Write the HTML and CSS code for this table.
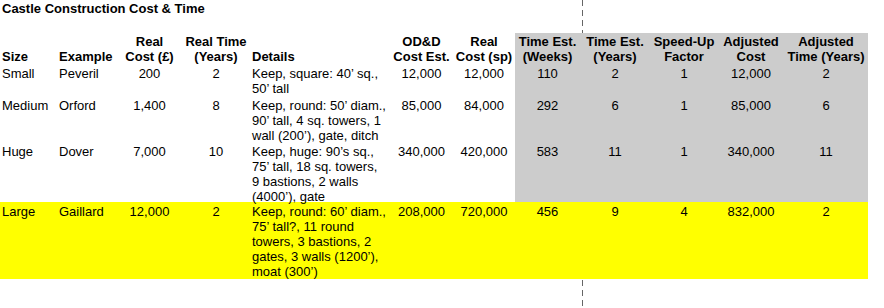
FILE: index.html
```html
<!DOCTYPE html>
<html>
<head>
<meta charset="utf-8">
<link rel="stylesheet" href="styles.css">
</head>
<body>
<div class="sheet">
  <div class="pagebreak"></div>
  <div class="title">Castle Construction Cost &amp; Time</div>
  <table class="grid">
    <colgroup>
      <col class="c-size"><col class="c-example"><col class="c-rcost"><col class="c-rtime"><col class="c-details"><col class="c-odd"><col class="c-rsp"><col class="c-weeks"><col class="c-years"><col class="c-speed"><col class="c-adjc"><col class="c-adjt">
    </colgroup>
    <thead>
      <tr class="r-head">
        <th class="l">Size</th>
        <th class="l">Example</th>
        <th>Real<br>Cost (£)</th>
        <th>Real Time<br>(Years)</th>
        <th class="l">Details</th>
        <th>OD&amp;D<br>Cost Est.</th>
        <th>Real<br>Cost (sp)</th>
        <th class="g">Time Est.<br>(Weeks)</th>
        <th class="g">Time Est.<br>(Years)</th>
        <th class="g">Speed-Up<br>Factor</th>
        <th class="g">Adjusted<br>Cost</th>
        <th class="g">Adjusted<br>Time (Years)</th>
      </tr>
    </thead>
    <tbody>
      <tr class="r-small">
        <td class="l">Small</td>
        <td class="l">Peveril</td>
        <td>200</td>
        <td>2</td>
        <td class="l">Keep, square: 40’ sq.,<br>50’ tall</td>
        <td>12,000</td>
        <td>12,000</td>
        <td class="g">110</td>
        <td class="g">2</td>
        <td class="g">1</td>
        <td class="g">12,000</td>
        <td class="g">2</td>
      </tr>
      <tr class="r-medium">
        <td class="l">Medium</td>
        <td class="l">Orford</td>
        <td>1,400</td>
        <td>8</td>
        <td class="l">Keep, round: 50’ diam.,<br>90’ tall, 4 sq. towers, 1<br>wall (200’), gate, ditch</td>
        <td>85,000</td>
        <td>84,000</td>
        <td class="g">292</td>
        <td class="g">6</td>
        <td class="g">1</td>
        <td class="g">85,000</td>
        <td class="g">6</td>
      </tr>
      <tr class="r-huge">
        <td class="l">Huge</td>
        <td class="l">Dover</td>
        <td>7,000</td>
        <td>10</td>
        <td class="l"><div class="clip">Keep, huge: 90’s sq.,<br>75’ tall, 18 sq. towers,<br>9 bastions, 2 walls<br>(4000’), gate</div></td>
        <td>340,000</td>
        <td>420,000</td>
        <td class="g">583</td>
        <td class="g">11</td>
        <td class="g">1</td>
        <td class="g">340,000</td>
        <td class="g">11</td>
      </tr>
      <tr class="r-large">
        <td class="l">Large</td>
        <td class="l">Gaillard</td>
        <td>12,000</td>
        <td>2</td>
        <td class="l">Keep, round: 60’ diam.,<br>75’ tall?, 11 round<br>towers, 3 bastions, 2<br>gates, 3 walls (1200’),<br>moat (300’)</td>
        <td>208,000</td>
        <td>720,000</td>
        <td>456</td>
        <td>9</td>
        <td>4</td>
        <td>832,000</td>
        <td>2</td>
      </tr>
    </tbody>
  </table>
</div>
</body>
</html>
```

FILE: styles.css
```css
html, body {
  margin: 0;
  padding: 0;
  background: #ffffff;
}

body {
  font-family: "Liberation Sans", Arial, sans-serif;
  font-size: 13px;
  line-height: 15px;
  color: #000000;
}

.sheet {
  position: relative;
  width: 884px;
  height: 308px;
  overflow: hidden;
}

.pagebreak {
  position: absolute;
  left: 582px;
  top: 0;
  width: 1px;
  height: 308px;
  background: repeating-linear-gradient(to bottom, #666666 0 6px, transparent 6px 10px);
  z-index: 0;
}

.title {
  position: relative;
  z-index: 1;
  font-weight: bold;
  padding: 1px 0 0 2px;
  height: 32px;
}

.grid {
  position: relative;
  z-index: 1;
  border-collapse: collapse;
  border-spacing: 0;
  table-layout: fixed;
  width: 868px;
}

.grid th,
.grid td {
  padding: 1px 2px 0 2px;
  text-align: center;
  white-space: nowrap;
  overflow: visible;
}

.grid th {
  font-weight: bold;
  vertical-align: bottom;
  padding-bottom: 1px;
}

.grid td {
  vertical-align: top;
}

.grid .l {
  text-align: left;
}

.grid .g {
  background: #cccccc;
}

.c-size { width: 57px; }
.c-example { width: 60px; }
.c-rcost { width: 65px; }
.c-rtime { width: 68px; }
.c-details { width: 140px; }
.c-odd { width: 63px; }
.c-rsp { width: 62px; }
.c-weeks { width: 65px; }
.c-years { width: 70px; }
.c-speed { width: 68px; }
.c-adjc { width: 66px; }
.c-adjt { width: 84px; }

.r-head { height: 32px; }
.r-small { height: 32px; }
.r-medium { height: 46px; }
.r-huge { height: 59px; }
.r-large { height: 77px; }

.clip {
  height: 58px;
}

.r-large td {
  background: #ffff00;
  padding-top: 2px;
}
```
